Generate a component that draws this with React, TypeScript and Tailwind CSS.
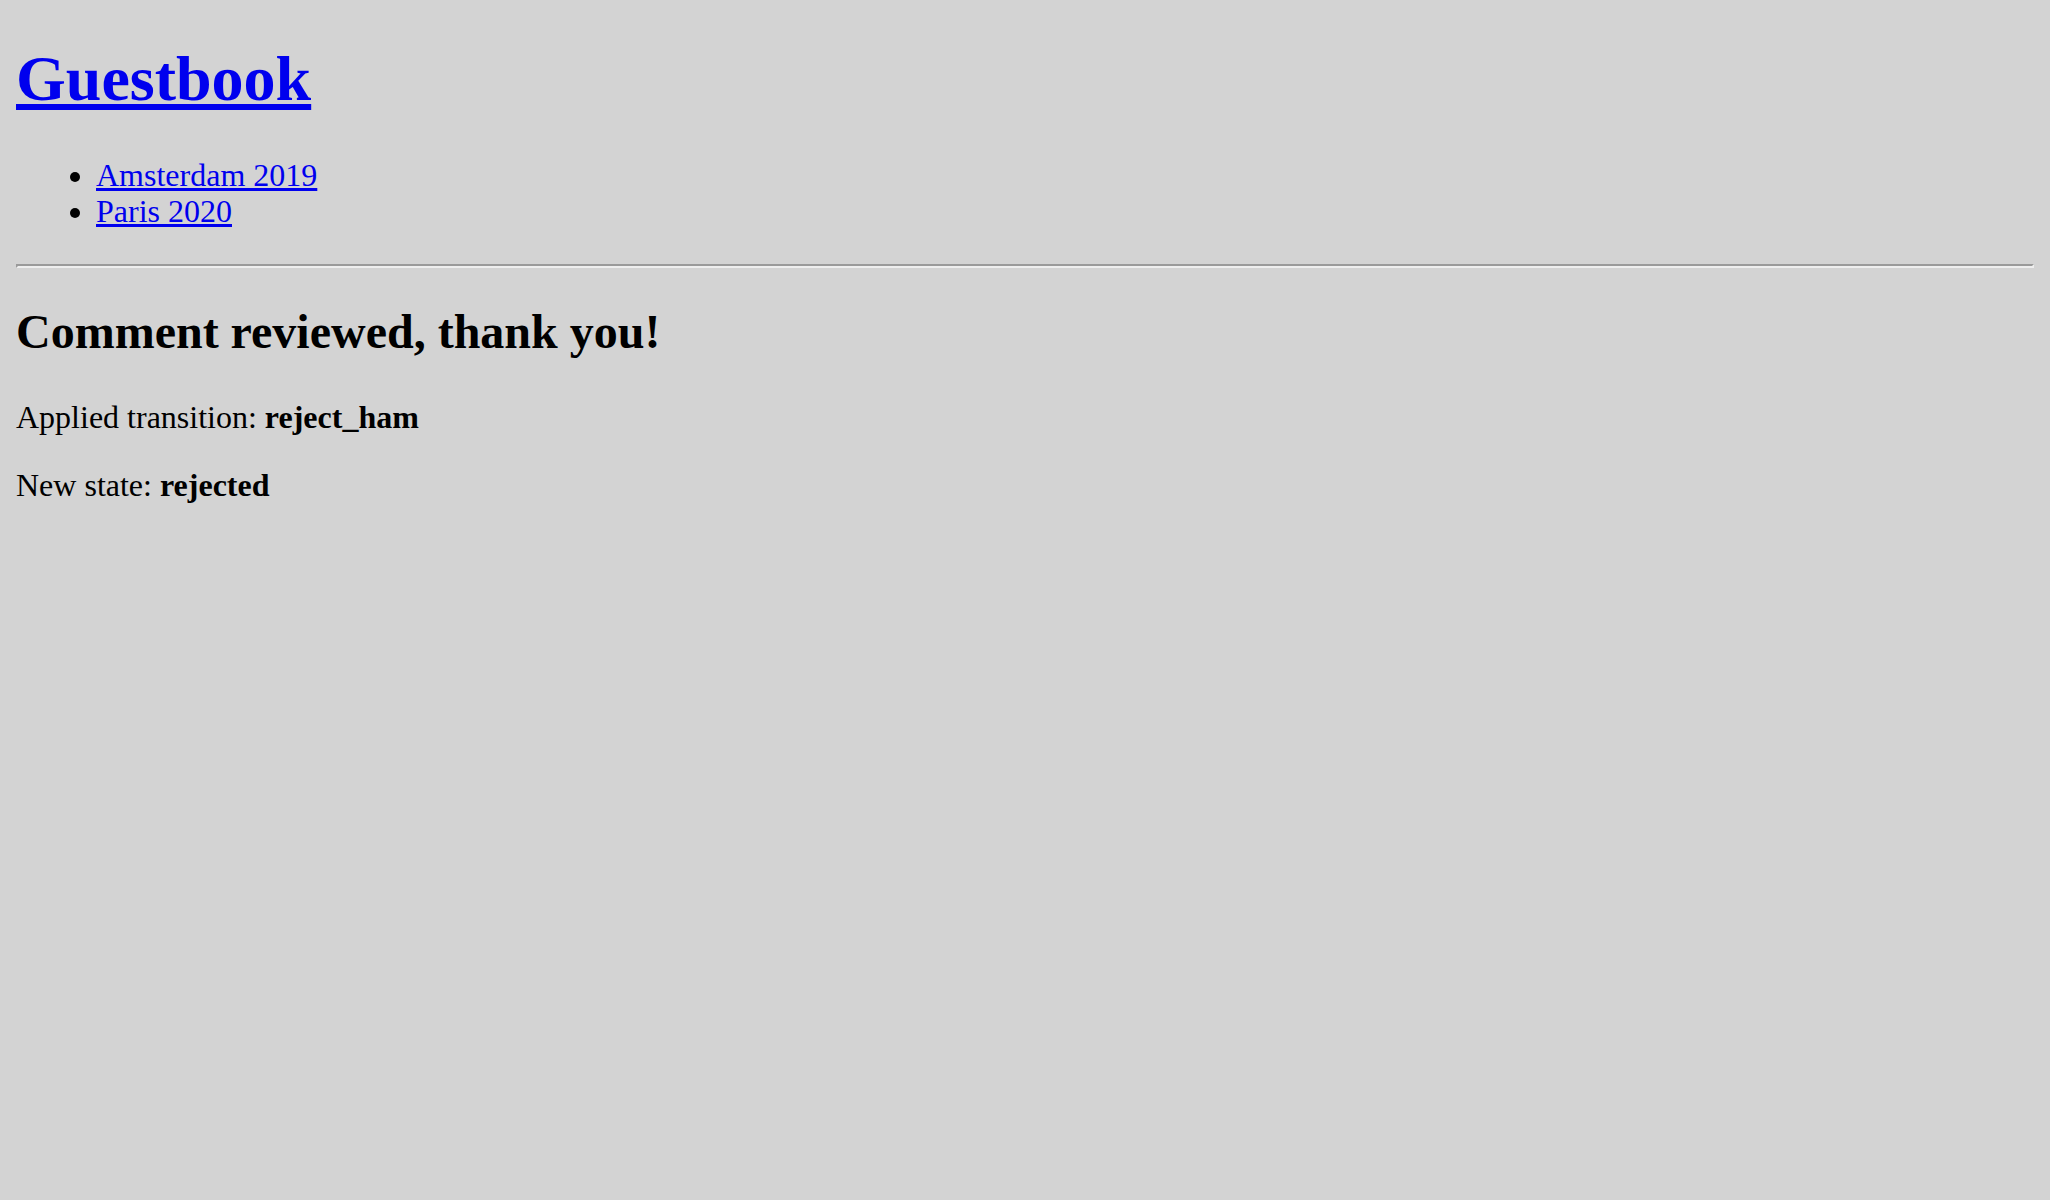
import React from "react";

export default function App() {
  return (
    <div className="min-h-screen bg-[#d3d3d3] text-black flow-root px-[16px] font-['Liberation_Serif','Times_New_Roman',serif] text-[32px] leading-[36px]">
      <h1 className="mt-[43px] mb-[43px] text-[64px] font-bold leading-[71px]">
        <a href="#" className="text-[#0000ee] underline">Guestbook</a>
      </h1>
      <ul className="list-disc pl-[80px] mt-0 mb-[35px]">
        <li className="leading-[36px]">
          <a href="#" className="text-[#0000ee] underline">Amsterdam 2019</a>
        </li>
        <li className="leading-[36px]">
          <a href="#" className="text-[#0000ee] underline">Paris 2020</a>
        </li>
      </ul>
      <hr className="mt-0 mb-[37px] h-0 border-t-2 border-b-2 border-l-2 border-r-2 border-t-[#9a9a9a] border-l-[#9a9a9a] border-b-[#eeeeee] border-r-[#eeeeee]" />
      <h2 className="mt-0 mb-[41px] text-[48px] font-bold leading-[53px]">Comment reviewed, thank you!</h2>
      <p className="mt-0 mb-[32px] leading-[36px]">
        Applied transition: <strong className="font-bold">reject_ham</strong>
      </p>
      <p className="my-0 leading-[36px]">
        New state: <strong className="font-bold">rejected</strong>
      </p>
    </div>
  );
}
